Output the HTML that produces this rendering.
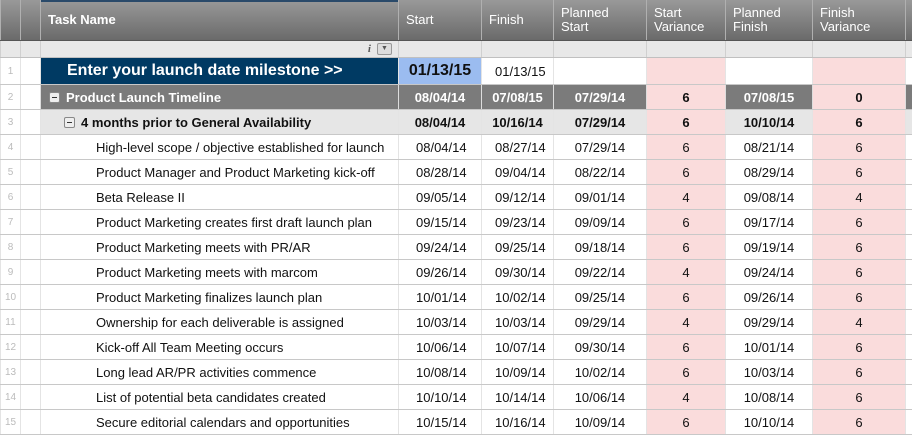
<!DOCTYPE html>
<html><head><style>
body{margin:0;width:912px;height:428px;overflow:hidden;background:#fff;font-family:"Liberation Sans",Arial,sans-serif;}
table{border-collapse:collapse;table-layout:fixed;width:912px;}
td{padding:0;font-size:13px;color:#111;white-space:nowrap;overflow:hidden;border-left:1px solid #e4e4e4;border-bottom:1px solid #c8c8c8;height:24px;}
tr.h td{height:40px;background:linear-gradient(#999,#6a6a6a);color:#fff;font-weight:bold;font-size:13px;border-left:1px solid #b0b0b0;border-bottom:1px solid #555;vertical-align:middle;padding-left:7px;line-height:14px;}
tr.h td.n{font-weight:normal;}
tr.f td{height:16px;background:#e8e8e8;border-left:1px solid #d0d0d0;border-bottom:1px solid #c0c0c0;}
td.rn{color:#bbb;font-size:10px;text-align:center;}
td.s{padding-left:17px;}
td.fi{padding-left:13px;}
td.c{text-align:center;}
td.v{background:#fadcdc;text-align:center;}
td.t{padding-left:55px;}
tr.r1 td{height:26px;}
tr.g td{background:#7b7b7b;color:#fff;font-weight:bold;text-align:center;border-left:1px solid #ddd;}
tr.g td.v{background:#fadcdc;color:#111;}
tr.g td.rn{background:#fff;color:#bbb;font-weight:normal;}
tr.g td.e{background:#fff;}
tr.p td{background:#e6e6e6;font-weight:bold;text-align:center;}
tr.p td.v{background:#fadcdc;}
tr.p td.rn,tr.p td.e{background:#fff;font-weight:normal;}
.mi{display:inline-block;width:9px;height:9px;border:1px solid #888;border-radius:2px;background:#eee;vertical-align:-1px;position:relative;margin-right:6px;}
.mi:after{content:"";position:absolute;left:2px;right:2px;top:4px;height:1px;background:#333;}
</style></head><body>
<table>
<colgroup><col style="width:20px"><col style="width:20px"><col style="width:358px"><col style="width:83px"><col style="width:72px"><col style="width:93px"><col style="width:79px"><col style="width:87px"><col style="width:93px"><col style="width:7px"></colgroup>
<tr class="h"><td></td><td></td><td style="box-shadow:inset 0 2px 0 #2a4a6a;">Task Name</td><td class="n">Start</td><td class="n">Finish</td><td class="n">Planned<br>Start</td><td class="n">Start<br>Variance</td><td class="n">Planned<br>Finish</td><td class="n">Finish<br>Variance</td><td></td></tr>
<tr class="f"><td></td><td></td><td style="text-align:right;font-size:11px;color:#555;padding-right:6px"><i style="font-family:'Liberation Serif',serif;font-weight:bold">i</i>&nbsp;&nbsp;<span style="display:inline-block;width:13px;height:10px;border:1px solid #999;border-radius:2px;background:#ddd;font-size:7px;line-height:10px;text-align:center;vertical-align:middle">▼</span></td><td></td><td></td><td></td><td></td><td></td><td></td><td></td></tr>
<tr class="r1"><td class="rn">1</td><td></td><td style="background:#003a63;color:#fff;font-weight:bold;font-size:16px;padding-left:26px">Enter your launch date milestone &gt;&gt;</td><td class="c" style="background:#9bbcf0;font-weight:bold;font-size:16px">01/13/15</td><td class="fi">01/13/15</td><td></td><td class="v"></td><td></td><td class="v"></td><td></td></tr>
<tr class="g"><td class="rn">2</td><td class="e"></td><td style="text-align:left;padding-left:8px"><span class="mi"></span>Product Launch Timeline</td><td>08/04/14</td><td>07/08/15</td><td>07/29/14</td><td class="v">6</td><td>07/08/15</td><td class="v">0</td><td></td></tr>
<tr class="p"><td class="rn">3</td><td class="e"></td><td style="text-align:left;padding-left:23px"><span class="mi"></span>4 months prior to General Availability</td><td>08/04/14</td><td>10/16/14</td><td>07/29/14</td><td class="v">6</td><td>10/10/14</td><td class="v">6</td><td></td></tr>
<tr><td class="rn">4</td><td></td><td class="t">High-level scope / objective established for launch</td><td class="s">08/04/14</td><td class="fi">08/27/14</td><td class="c">07/29/14</td><td class="v">6</td><td class="c">08/21/14</td><td class="v">6</td><td></td></tr>
<tr><td class="rn">5</td><td></td><td class="t">Product Manager and Product Marketing kick-off</td><td class="s">08/28/14</td><td class="fi">09/04/14</td><td class="c">08/22/14</td><td class="v">6</td><td class="c">08/29/14</td><td class="v">6</td><td></td></tr>
<tr><td class="rn">6</td><td></td><td class="t">Beta Release II</td><td class="s">09/05/14</td><td class="fi">09/12/14</td><td class="c">09/01/14</td><td class="v">4</td><td class="c">09/08/14</td><td class="v">4</td><td></td></tr>
<tr><td class="rn">7</td><td></td><td class="t">Product Marketing creates first draft launch plan</td><td class="s">09/15/14</td><td class="fi">09/23/14</td><td class="c">09/09/14</td><td class="v">6</td><td class="c">09/17/14</td><td class="v">6</td><td></td></tr>
<tr><td class="rn">8</td><td></td><td class="t">Product Marketing meets with PR/AR</td><td class="s">09/24/14</td><td class="fi">09/25/14</td><td class="c">09/18/14</td><td class="v">6</td><td class="c">09/19/14</td><td class="v">6</td><td></td></tr>
<tr><td class="rn">9</td><td></td><td class="t">Product Marketing meets with marcom</td><td class="s">09/26/14</td><td class="fi">09/30/14</td><td class="c">09/22/14</td><td class="v">4</td><td class="c">09/24/14</td><td class="v">6</td><td></td></tr>
<tr><td class="rn">10</td><td></td><td class="t">Product Marketing finalizes launch plan</td><td class="s">10/01/14</td><td class="fi">10/02/14</td><td class="c">09/25/14</td><td class="v">6</td><td class="c">09/26/14</td><td class="v">6</td><td></td></tr>
<tr><td class="rn">11</td><td></td><td class="t">Ownership for each deliverable is assigned</td><td class="s">10/03/14</td><td class="fi">10/03/14</td><td class="c">09/29/14</td><td class="v">4</td><td class="c">09/29/14</td><td class="v">4</td><td></td></tr>
<tr><td class="rn">12</td><td></td><td class="t">Kick-off All Team Meeting occurs</td><td class="s">10/06/14</td><td class="fi">10/07/14</td><td class="c">09/30/14</td><td class="v">6</td><td class="c">10/01/14</td><td class="v">6</td><td></td></tr>
<tr><td class="rn">13</td><td></td><td class="t">Long lead AR/PR activities commence</td><td class="s">10/08/14</td><td class="fi">10/09/14</td><td class="c">10/02/14</td><td class="v">6</td><td class="c">10/03/14</td><td class="v">6</td><td></td></tr>
<tr><td class="rn">14</td><td></td><td class="t">List of potential beta candidates created</td><td class="s">10/10/14</td><td class="fi">10/14/14</td><td class="c">10/06/14</td><td class="v">4</td><td class="c">10/08/14</td><td class="v">6</td><td></td></tr>
<tr><td class="rn">15</td><td></td><td class="t">Secure editorial calendars and opportunities</td><td class="s">10/15/14</td><td class="fi">10/16/14</td><td class="c">10/09/14</td><td class="v">6</td><td class="c">10/10/14</td><td class="v">6</td><td></td></tr>
</table>
</body></html>
